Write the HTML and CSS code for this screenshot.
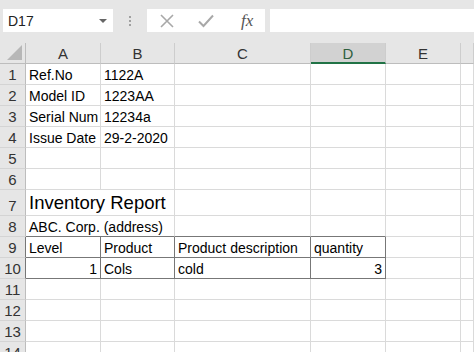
FILE: index.html
```html
<!DOCTYPE html>
<html lang="en">
<head>
    <meta charset="UTF-8">
    <title>Inventory Report</title>
    <link rel="stylesheet" href="styles.css">
</head>
<body>
    <div class="bar">
        <div class="namebox">
            <span>D17</span>
            <span class="drop"></span>
        </div>
        <div class="dots"><i></i><i></i><i></i></div>
        <div class="fbtns">
            <svg class="ic" width="14" height="14" viewBox="0 0 14 14"><path d="M1 1 L13 13 M13 1 L1 13" stroke="#a8a8a8" stroke-width="1.6" fill="none"/></svg>
            <svg class="ic" width="16" height="14" viewBox="0 0 16 14"><path d="M1 7.5 L5.5 12 L15 1.5" stroke="#a8a8a8" stroke-width="2" fill="none"/></svg>
            <span class="fx">fx</span>
        </div>
        <div class="finput"></div>
    </div>

    <div class="sheet">
        <div class="hd corner"><span class="tri"></span></div>
        <div class="hd col">A</div>
        <div class="hd col">B</div>
        <div class="hd col">C</div>
        <div class="hd col sel">D</div>
        <div class="hd col">E</div>
        <div class="hd col"></div>

        <div class="hd num">1</div>
        <div class="c">Ref.No</div><div class="c">1122A</div><div class="c"></div><div class="c"></div><div class="c"></div><div class="c"></div>

        <div class="hd num">2</div>
        <div class="c">Model ID</div><div class="c">1223AA</div><div class="c"></div><div class="c"></div><div class="c"></div><div class="c"></div>

        <div class="hd num">3</div>
        <div class="c">Serial Num</div><div class="c">12234a</div><div class="c"></div><div class="c"></div><div class="c"></div><div class="c"></div>

        <div class="hd num">4</div>
        <div class="c">Issue Date</div><div class="c">29-2-2020</div><div class="c"></div><div class="c"></div><div class="c"></div><div class="c"></div>

        <div class="hd num">5</div>
        <div class="c"></div><div class="c"></div><div class="c"></div><div class="c"></div><div class="c"></div><div class="c"></div>

        <div class="hd num">6</div>
        <div class="c"></div><div class="c"></div><div class="c"></div><div class="c"></div><div class="c"></div><div class="c"></div>

        <div class="hd num tall">7</div>
        <div class="c span2 title">Inventory Report</div><div class="c"></div><div class="c"></div><div class="c"></div><div class="c"></div>

        <div class="hd num">8</div>
        <div class="c span2 above">ABC. Corp. (address)</div><div class="c above"></div><div class="c above"></div><div class="c"></div><div class="c"></div>

        <div class="hd num edge">9</div>
        <div class="c t">Level</div><div class="c t">Product</div><div class="c t">Product description</div><div class="c t">quantity</div><div class="c"></div><div class="c"></div>

        <div class="hd num edge">10</div>
        <div class="c t r">1</div><div class="c t">Cols</div><div class="c t">cold</div><div class="c t r">3</div><div class="c"></div><div class="c"></div>

        <div class="hd num">11</div>
        <div class="c"></div><div class="c"></div><div class="c"></div><div class="c"></div><div class="c"></div><div class="c"></div>

        <div class="hd num">12</div>
        <div class="c"></div><div class="c"></div><div class="c"></div><div class="c"></div><div class="c"></div><div class="c"></div>

        <div class="hd num">13</div>
        <div class="c"></div><div class="c"></div><div class="c"></div><div class="c"></div><div class="c"></div><div class="c"></div>

        <div class="hd num">14</div>
        <div class="c"></div><div class="c"></div><div class="c"></div><div class="c"></div><div class="c"></div><div class="c"></div>
    </div>
</body>
</html>
```

FILE: styles.css
```css
body {
    margin: 0;
    padding: 0;
    font-family: 'Liberation Sans', Arial, sans-serif;
    background: #e6e6e6;
    overflow: hidden;
    color: #000;
}

/* formula bar */
.bar {
    display: flex;
    align-items: flex-start;
    height: 43px;
    padding-top: 9px;
    box-sizing: border-box;
}

.namebox {
    margin-left: 3px;
    width: 110px;
    height: 23px;
    background: #fff;
    display: flex;
    align-items: center;
    justify-content: space-between;
    padding: 0 6px 0 5px;
    box-sizing: border-box;
    font-size: 14px;
    color: #222;
}

.drop {
    width: 0;
    height: 0;
    border-left: 4px solid transparent;
    border-right: 4px solid transparent;
    border-top: 4px solid #666;
    margin-top: 1px;
}

.dots {
    width: 34px;
    height: 23px;
    display: flex;
    flex-direction: column;
    align-items: center;
    justify-content: center;
    gap: 2px;
}

.dots i {
    width: 2px;
    height: 2px;
    background: #a0a0a0;
}

.fbtns {
    width: 118px;
    height: 23px;
    background: #fff;
    display: flex;
    align-items: center;
    box-sizing: border-box;
    padding-left: 13px;
}

.fbtns .ic:nth-child(2) {
    margin-left: 24px;
}

.fx {
    margin-left: 27px;
    font-family: 'Liberation Serif', serif;
    font-style: italic;
    font-size: 17px;
    color: #555;
}

.finput {
    flex: 1;
    margin-left: 5px;
    height: 23px;
    background: #fff;
}

/* grid */
.sheet {
    display: grid;
    grid-template-columns: 26px 75px 74px 136px 75px 75px 13px;
    grid-template-rows: 21px repeat(6, 21px) 26px repeat(7, 21px);
    background: #fff;
}

.sheet > div {
    box-sizing: border-box;
    white-space: nowrap;
    overflow: visible;
}

.hd {
    background: #e6e6e6;
    color: #333;
    font-size: 15px;
    display: flex;
    align-items: center;
    justify-content: center;
}

.corner {
    border-right: 1px solid #bdbdbd;
    border-bottom: 1px solid #bdbdbd;
    position: relative;
}

.tri {
    position: absolute;
    right: 3px;
    bottom: 3px;
    width: 0;
    height: 0;
    border-left: 15px solid transparent;
    border-bottom: 15px solid #b7b7b7;
}

.col {
    border-right: 1px solid #cdcdcd;
    border-bottom: 1px solid #bdbdbd;
    padding-top: 1px;
}

.col.sel {
    background: #d2d2d2;
    color: #2f5f3f;
    border-bottom: 2px solid #217346;
}

.num {
    border-right: 1px solid #bdbdbd;
    border-bottom: 1px solid #d4d4d4;
}

.num.edge {
    border-right-color: #777;
}

.num.tall {
    padding-top: 5px;
}

.c {
    border-right: 1px solid #dadada;
    border-bottom: 1px solid #dadada;
    font-size: 14px;
    padding: 2px 3px 0;
    line-height: 18px;
}

.span2 {
    grid-column: span 2;
}

.title {
    font-size: 18.5px;
    line-height: 24px;
    padding-top: 1px;
}

.above {
    border-bottom-color: #777;
}

.t {
    border-right-color: #777;
    border-bottom-color: #777;
}

.r {
    text-align: right;
}
```
